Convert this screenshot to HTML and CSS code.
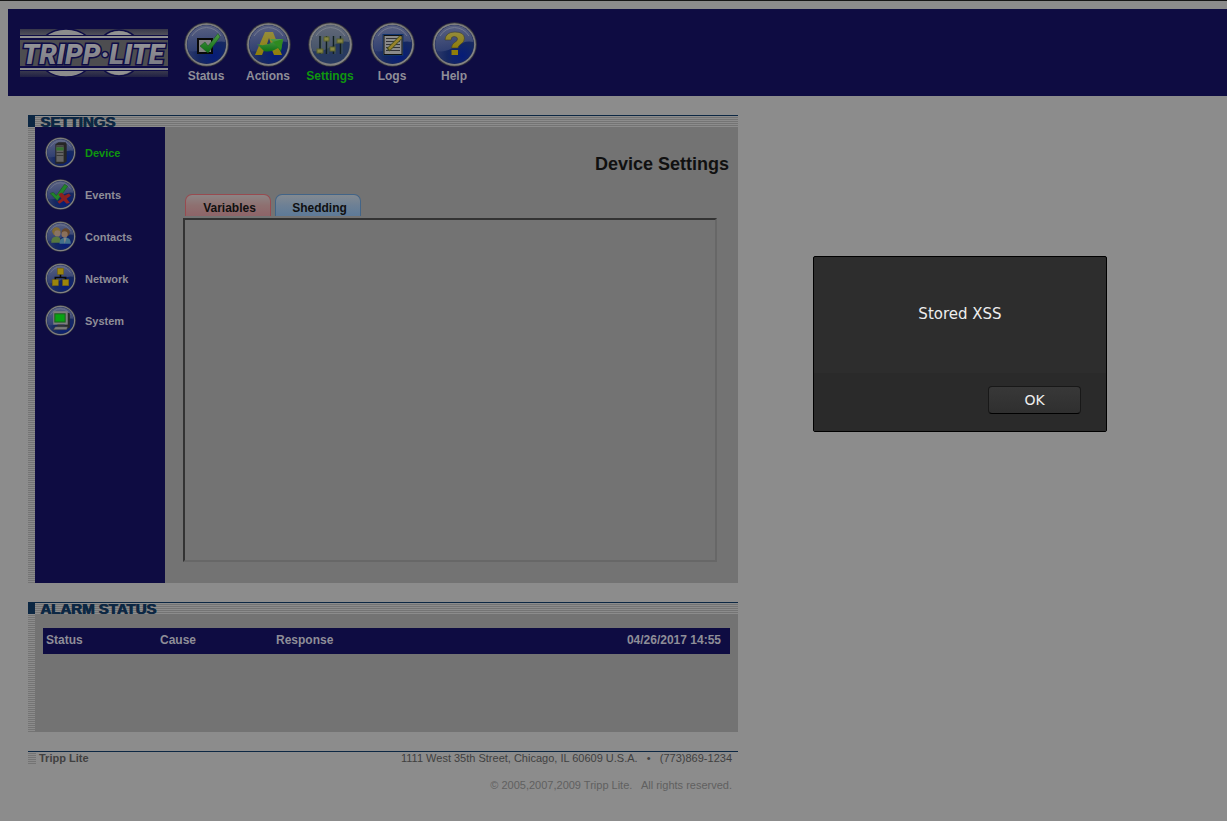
FILE: index.html
```
<!DOCTYPE html>
<html lang="en">
<head>
  <meta charset="UTF-8">
  <meta name="viewport" content="width=device-width, initial-scale=1.0">
  <title>Device Settings</title>
  <link rel="stylesheet" href="styles.css">
</head>
<body>

  <svg class="defs" width="0" height="0" aria-hidden="true">
    <defs>
      <linearGradient id="ring" x1="0" y1="0" x2="1" y2="1">
        <stop offset="0" stop-color="#848484"/>
        <stop offset="0.5" stop-color="#777"/>
        <stop offset="1" stop-color="#8c8c8c"/>
      </linearGradient>
      <radialGradient id="blue" cx="0.7" cy="0.8" r="0.8">
        <stop offset="0" stop-color="#061c78"/>
        <stop offset="0.5" stop-color="#152861"/>
        <stop offset="1" stop-color="#35406f"/>
      </radialGradient>
      <linearGradient id="glare" x1="0" y1="0" x2="0" y2="1">
        <stop offset="0" stop-color="#5f6684"/>
        <stop offset="1" stop-color="#334273"/>
      </linearGradient>
      <linearGradient id="glareGray" x1="0" y1="0" x2="0" y2="1">
        <stop offset="0" stop-color="#626978"/>
        <stop offset="1" stop-color="#45536a"/>
      </linearGradient>
      <linearGradient id="steel" x1="0" y1="0" x2="0" y2="1">
        <stop offset="0" stop-color="#37374b"/>
        <stop offset="0.3" stop-color="#74746e"/>
        <stop offset="0.65" stop-color="#66665f"/>
        <stop offset="1" stop-color="#202044"/>
      </linearGradient>
      <linearGradient id="letters" x1="0" y1="0" x2="0" y2="1">
        <stop offset="0" stop-color="#9b9b9b"/>
        <stop offset="1" stop-color="#747480"/>
      </linearGradient>
      <linearGradient id="green" x1="0" y1="0" x2="0" y2="1">
        <stop offset="0" stop-color="#4f9a48"/>
        <stop offset="1" stop-color="#0b6e12"/>
      </linearGradient>
      <linearGradient id="gold" x1="0" y1="0" x2="0" y2="1">
        <stop offset="0" stop-color="#948c3c"/>
        <stop offset="1" stop-color="#907e0a"/>
      </linearGradient>
    </defs>
    <symbol id="disc" viewBox="0 0 45 45">
      <circle cx="22.5" cy="22.5" r="22.3" fill="#35353c"/>
      <circle cx="22.5" cy="22.5" r="21.3" fill="url(#ring)"/>
      <circle cx="22.5" cy="22.5" r="19.6" fill="#1c2858"/>
      <circle cx="22.5" cy="22.5" r="19" fill="url(#blue)"/>
      <path d="M3.5 25A19 19 0 0 1 41.5 20Q33 18 24 24Q14 31 5 29Z" fill="url(#glare)" opacity="0.85"/>
      <path d="M8 14Q13 6 22.5 5.5Q32 6 37 14" fill="none" stroke="#737990" stroke-width="1"/>
    </symbol>
    <symbol id="disc-gray" viewBox="0 0 45 45">
      <circle cx="22.5" cy="22.5" r="22.3" fill="#35353c"/>
      <circle cx="22.5" cy="22.5" r="21.3" fill="url(#ring)"/>
      <circle cx="22.5" cy="22.5" r="19.3" fill="#27395f"/>
      <path d="M3.5 25A19 19 0 0 1 41.5 20Q33 18 24 24Q14 31 5 29Z" fill="url(#glareGray)"/>
      <path d="M8 14Q13 6 22.5 5.5Q32 6 37 14" fill="none" stroke="#7a808c" stroke-width="1"/>
    </symbol>
  </svg>

  <header class="topbar">
    <a class="logo" href="#" aria-label="Tripp Lite home">
      <svg width="148" height="48" viewBox="0 0 148 48">
        <rect width="148" height="48" fill="url(#steel)"/>
        <ellipse cx="46" cy="24" rx="29" ry="24" fill="#8c8c8c" stroke="#0e0c46" stroke-width="1.5"/>
        <ellipse cx="99" cy="24" rx="23" ry="23" fill="#68686a" stroke="#0e0c46" stroke-width="1.5"/>
        <ellipse cx="99" cy="24" rx="19" ry="20" fill="none" stroke="#929292" stroke-width="4"/>
        <rect y="6" width="148" height="36" fill="#0e0c46"/>
        <rect y="7" width="148" height="2" fill="#919191"/>
        <rect y="39" width="148" height="2" fill="#919191"/>
        <rect y="11" width="148" height="26" fill="#4d4d50"/>
        <text class="logo-text" x="2" y="35">TRIPP·LITE</text>
      </svg>
    </a>
    <nav class="main-nav">
      <a href="#">
        <svg width="45" height="45" viewBox="0 0 45 45">
          <use href="#disc"/>
          <rect x="14" y="17" width="14" height="14" fill="#858585" stroke="#080808" stroke-width="2"/>
          <path d="M16 24L21 20L24 24L34 11.5L36 15L24 31Z" fill="url(#green)" stroke="#164f1c" stroke-width="0.5"/>
        </svg>
        Status
      </a>
      <a href="#">
        <svg width="45" height="45" viewBox="0 0 45 45">
          <use href="#disc"/>
          <path d="M19 10H27L36 33H28L26 28H18L16 33H9Z" fill="url(#gold)"/>
          <path d="M21 22L23 16L25 22Z" fill="#263867"/>
          <path d="M11 22Q18 25 27 20L24 17L37 17L35 30L32 26Q24 31 18 29Z" fill="url(#green)"/>
          <path d="M27 20L37 17L35 28" fill="#2f8a20"/>
        </svg>
        Actions
      </a>
      <a href="#" class="active">
        <svg width="45" height="45" viewBox="0 0 45 45">
          <use href="#disc-gray"/>
          <path d="M12 14V32M18.5 14V32M25.5 14V32M32.5 14V32" stroke="#101e20" stroke-width="1.5"/>
          <path d="M13.5 14V32M20 14V32M27 14V32M34 14V32" stroke="#4d6250" stroke-width="0.7"/>
          <g fill="#858443" stroke="#58612d">
            <rect x="9" y="27" width="6" height="4"/>
            <rect x="16" y="15" width="5" height="4"/>
            <rect x="22" y="25" width="5" height="4"/>
            <rect x="29" y="17" width="6" height="4"/>
          </g>
        </svg>
        Settings
      </a>
      <a href="#">
        <svg width="45" height="45" viewBox="0 0 45 45">
          <use href="#disc"/>
          <rect x="13" y="12.5" width="20" height="21" fill="#888" stroke="#0e326c" stroke-width="1"/>
          <rect x="14" y="13.5" width="18" height="19" fill="#8a8a8a" stroke="#111" stroke-width="1"/>
          <path d="M16 16.5H30M16 19.5H30M16 22.5H30M16 25.5H30M16 28.5H30" stroke="#34343a"/>
          <path d="M18 28L31 15" stroke="#444f1f" stroke-width="4"/>
          <path d="M19 27L31 15" stroke="#98832b" stroke-width="2.5"/>
        </svg>
        Logs
      </a>
      <a href="#">
        <svg width="45" height="45" viewBox="0 0 45 45">
          <use href="#disc"/>
          <path d="M13 18H19Q19 14.500 22 14.500Q25.500 14.500 25.500 17Q25.500 19 22.500 20.500Q19.500 22.500 19.500 26H26Q26 24 29 22Q32.500 20 32.500 16Q32 10 23 10Q13.500 10 13 18Z" fill="url(#gold)" stroke="#3d3c2d" stroke-width="0.6"/>
          <rect x="19.5" y="28" width="6.5" height="5" fill="#907e0a"/>
        </svg>
        Help
      </a>
    </nav>
  </header>

  <main class="page">
    <section class="box">
      <h2 class="box-title">SETTINGS</h2>
      <div class="box-body settings">
        <nav class="side-nav">
          <a href="#" class="active">
            <svg width="31" height="31" viewBox="0 0 30 30">
              <use href="#disc"/>
              <path d="M10 7L13 5H20L21 7V24L18 26H10Z" fill="#262626"/>
              <rect x="11" y="8" width="7" height="16" fill="#626262"/>
              <path d="M11 9H18M11 15H18M11 18H18" stroke="#393939"/>
              <rect x="11" y="10" width="7" height="3" fill="#33722f"/>
            </svg>
            Device
          </a>
          <a href="#">
            <svg width="31" height="31" viewBox="0 0 30 30">
              <use href="#disc"/>
              <path d="M5 14L8 13L11 16L19 5L22 7L12 21Z" fill="#22852a" stroke="#164f1c" stroke-width="0.5"/>
              <path d="M13 15L16 13L19 16L23 14L25 16L21 19L24 23L21 24L18 21L14 24L12 22L16 19Z" fill="#8c2020"/>
            </svg>
            Events
          </a>
          <a href="#">
            <svg width="31" height="31" viewBox="0 0 30 30">
              <use href="#disc"/>
              <circle cx="11" cy="10" r="4" fill="#80692f"/>
              <circle cx="12" cy="12" r="3" fill="#8a7464"/>
              <path d="M6 21Q6 15 11 15Q15 15 16 21Z" fill="#57783e"/>
              <circle cx="20" cy="11" r="4" fill="#65462b"/>
              <circle cx="19" cy="13" r="3" fill="#8a705c"/>
              <path d="M14 22Q14 16 20 16Q25 16 25 22Z" fill="#42718b"/>
              <path d="M18 16L19 22L21 16Z" fill="#858585"/>
            </svg>
            Contacts
          </a>
          <a href="#">
            <svg width="31" height="31" viewBox="0 0 30 30">
              <use href="#disc"/>
              <path d="M15 11V14M10 17V14H20V17" fill="none" stroke="#080808" stroke-width="1.5"/>
              <g fill="#9b850d" stroke="#6e5b12" stroke-width="0.5">
                <rect x="12" y="5" width="6" height="6"/>
                <rect x="7" y="16" width="6" height="6"/>
                <rect x="17" y="16" width="6" height="6"/>
              </g>
            </svg>
            Network
          </a>
          <a href="#">
            <svg width="31" height="31" viewBox="0 0 30 30">
              <use href="#disc"/>
              <path d="M20 7L24 8V22L19 24Z" fill="#29292c"/>
              <rect x="8" y="6" width="14" height="13" fill="#7e7e7e"/>
              <rect x="9.5" y="8.5" width="10" height="8" fill="#08a213" stroke="#225b24" stroke-width="1"/>
              <rect x="12" y="19" width="7" height="2" fill="#333"/>
              <path d="M10 21H22L21 24H8Z" fill="#7a7a7a" stroke="#353535" stroke-width="0.5"/>
            </svg>
            System
          </a>
        </nav>
        <div class="content">
          <h1>Device Settings</h1>
          <div class="tabs" role="tablist">
            <button type="button" class="tab tab-red" role="tab" aria-selected="true">Variables</button>
            <button type="button" class="tab tab-blue" role="tab" aria-selected="false">Shedding</button>
          </div>
          <div class="frame" role="tabpanel" aria-label="Variables"></div>
        </div>
      </div>
    </section>

    <section class="box">
      <h2 class="box-title">ALARM STATUS</h2>
      <div class="box-body alarms">
        <table class="alarm-table">
          <thead>
            <tr>
              <th class="col-status">Status</th>
              <th class="col-cause">Cause</th>
              <th>Response</th>
              <th class="col-date">04/26/2017 14:55</th>
            </tr>
          </thead>
        </table>
      </div>
    </section>

    <footer class="footer">
      <div class="footer-row">
        <strong>Tripp Lite</strong>
        <span>1111 West 35th Street, Chicago, IL 60609 U.S.A. &nbsp; • &nbsp; (773)869-1234</span>
      </div>
      <p class="copyright">© 2005,2007,2009 Tripp Lite. &nbsp; All rights reserved.</p>
    </footer>
  </main>

  <dialog class="alert" open>
    <p class="alert-message">Stored XSS</p>
    <form class="alert-actions" method="dialog">
      <button class="alert-ok">OK</button>
    </form>
  </dialog>

</body>
</html>
```
FILE: styles.css
```
* {
  box-sizing: border-box;
}

body {
  margin: 0;
  padding: 8px 0 0 8px;
  border-top: 1px solid #161616;
  background: #8c8c8c;
  color: #101010;
  font-family: "Liberation Sans", Arial, sans-serif;
  font-size: 12px;
}

a {
  text-decoration: none;
}

.defs {
  position: absolute;
}

/* Top bar */
.topbar {
  display: flex;
  height: 87px;
  padding: 13px 12px 0;
  background: #0e0c42;
}

.logo {
  margin-top: 7px;
}

.logo svg {
  display: block;
}

.logo-text {
  font-family: Roboto, "Liberation Sans", sans-serif;
  font-size: 28px;
  font-weight: 900;
  font-style: italic;
  fill: url(#letters);
  stroke: #0e0c46;
  stroke-width: 3px;
  paint-order: stroke;
}

.main-nav {
  display: flex;
  margin-left: 7px;
}

.main-nav a {
  display: flex;
  flex-direction: column;
  align-items: center;
  gap: 2px;
  width: 62px;
  color: #8e8e98;
  font-weight: bold;
  line-height: 14px;
}

.main-nav .active,
.side-nav .active {
  color: #0e960e;
}

/* Boxes */
.page {
  max-width: 730px;
  padding: 19px 0 0 20px;
}

.box {
  margin-bottom: 19px;
}

.box-title {
  height: 12px;
  margin: 0;
  padding-left: 5px;
  border-top: 1px solid #0c2743;
  border-left: 7px solid #0c2743;
  background: repeating-linear-gradient(#8c8c8c 0 1px, #747474 1px 2px);
  color: #0c2743;
  font-size: 15px;
  font-weight: bold;
  line-height: 11px;
  text-shadow: 1px 0 #0c2743;
}

.box-body {
  padding-left: 7px;
  background:
    linear-gradient(#737373, #737373) 7px 0 no-repeat,
    repeating-linear-gradient(#8c8c8c 0 1px, #747474 1px 2px);
}

.settings {
  display: flex;
  min-height: 456px;
}

.side-nav {
  display: flex;
  flex-direction: column;
  gap: 11px;
  width: 130px;
  padding: 10px;
  background: #0e0c42;
}

.side-nav a {
  display: flex;
  align-items: center;
  gap: 9px;
  color: #8e8e98;
  font-size: 11px;
  font-weight: bold;
}

.content {
  display: flex;
  flex: 1;
  flex-direction: column;
  padding: 27px 21px 21px 18px;
}

.content h1 {
  margin: 0 -12px 19px 0;
  font-size: 18px;
  line-height: 21px;
  text-align: right;
}

.tabs {
  display: flex;
  gap: 4px;
  padding-left: 2px;
  margin-bottom: 2px;
}

.tab {
  width: 86px;
  height: 22px;
  padding: 5px 0 0 3px;
  border: 1px solid;
  border-bottom: 0;
  border-radius: 7px 7px 0 0;
  color: #101010;
  font-family: inherit;
  font-size: 12px;
  font-weight: bold;
  line-height: 14px;
}

.tab-red {
  border-color: #984b50;
  background: linear-gradient(#8d8585, #8e7070 50%, #8e6468);
}

.tab-blue {
  border-color: #426487;
  background: linear-gradient(#838a91, #6d8095 50%, #5d7a98);
}

.frame {
  flex: 1;
  border: 2px solid;
  border-color: #333 #676767 #676767 #333;
}

/* Alarm status */
.alarms {
  min-height: 118px;
  padding: 14px 8px 14px 15px;
}

.alarm-table {
  width: 100%;
  border-collapse: collapse;
  background: #0e0c42;
  color: #8e8e98;
}

.alarm-table th {
  height: 26px;
  padding: 0 9px 2px 3px;
  text-align: left;
}

.alarm-table .col-status {
  width: 114px;
}

.alarm-table .col-cause {
  width: 116px;
}

.alarm-table .col-date {
  text-align: right;
}

/* Footer */
.footer {
  border-top: 1px solid #0c2743;
  color: #404040;
  font-size: 11px;
  line-height: 13px;
}

.footer-row {
  display: flex;
  justify-content: space-between;
  padding: 0 6px 0 11px;
  background: repeating-linear-gradient(#8c8c8c 0 1px, #747474 1px 2px) 0 0 / 8px 100% no-repeat;
}

.copyright {
  margin: 14px 6px 0;
  color: #606060;
  text-align: right;
}

/* Alert dialog */
.alert {
  position: absolute;
  top: 256px;
  left: 813px;
  width: 294px;
  margin: 0;
  padding: 0;
  border: 1px solid #000;
  border-radius: 2px;
  background: #2d2d2d;
  color: #eee;
  font-family: "DejaVu Sans", sans-serif;
  font-size: 15px;
}

.alert-message {
  margin: 0;
  padding: 48px 20px 50px;
  line-height: 18px;
  text-align: center;
}

.alert-actions {
  display: flex;
  justify-content: flex-end;
  padding: 13px 25px 17px;
  background: #2a2a2a;
}

.alert-ok {
  width: 93px;
  height: 28px;
  padding: 0;
  border: 1px solid #181818;
  border-bottom-color: #000;
  border-radius: 4px;
  background: linear-gradient(#383838, #2f2f2f);
  color: #eee;
  font-family: inherit;
  font-size: 14px;
}
```
